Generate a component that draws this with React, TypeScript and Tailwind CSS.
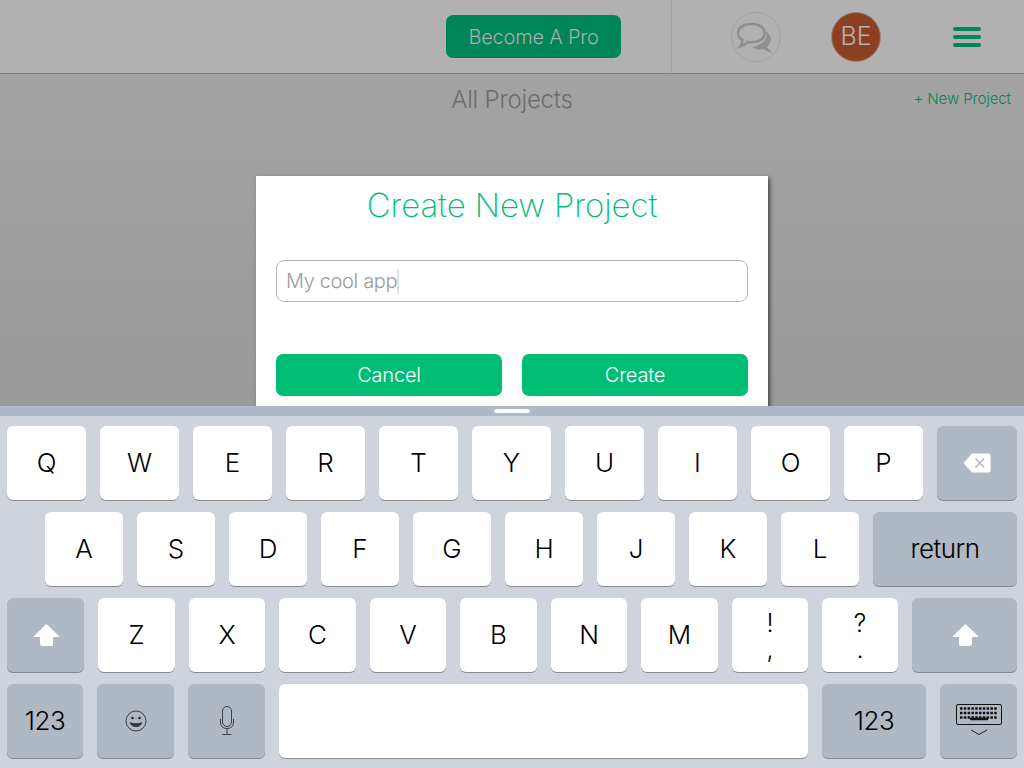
const FONT = "font-['Inter',Arial,sans-serif] font-light";

const ShiftIcon = () => (
  <svg width="27" height="24" viewBox="0 0 27 24" className="ml-[1px]">
    <path d="M13.5 1 L26 13 Q26.5 14 25.5 14 L20 14 L20 21 Q20 23 18 23 L9 23 Q7 23 7 21 L7 14 L1.500 14 Q0.500 14 1 13 Z" fill="#fff" />
  </svg>
);

const BackspaceIcon = () => (
  <svg width="28" height="20" viewBox="0 0 28 20">
    <path d="M9 0.500 H25.500 Q27.500 0.500 27.500 2.500 V17.500 Q27.500 19.500 25.500 19.500 H9 L0.500 10 Z" fill="#fff" />
    <path d="M12.500 5.500 L21 14.500 M21 5.500 L12.500 14.500" stroke="#b0b8c3" strokeWidth="1.600" />
  </svg>
);

const EmojiIcon = () => (
  <svg width="22" height="22" viewBox="0 0 22 22" fill="none">
    <circle cx="11" cy="11" r="10" stroke="#222" strokeWidth="0.800" />
    <circle cx="7.500" cy="8" r="1.300" fill="#222" />
    <circle cx="14.500" cy="8" r="1.300" fill="#222" />
    <path d="M4.500 12 Q11 14.500 17.500 12 Q16 17 11 17 Q6 17 4.500 12 Z" fill="#333" />
  </svg>
);

const MicIcon = () => (
  <svg width="14" height="29" viewBox="0 0 14 29" fill="none" stroke="#333" strokeWidth="0.900">
    <rect x="2.500" y="0.500" width="9" height="20" rx="4.500" />
    <path d="M0.500 13 V16 Q0.500 22.500 7 22.500 Q13.500 22.500 13.500 16 V13" />
    <path d="M7 22.500 V28 M2.500 28.500 H11.500" />
  </svg>
);

const HideKeyboardIcon = () => (
  <svg width="46" height="33" viewBox="0 0 46 33" fill="none">
    <rect x="0.500" y="0.500" width="45" height="20" rx="1.500" stroke="#111" />
    <path
      d="M4 4.500 H42 M4 9 H42 M4 13.500 H42"
      stroke="#111"
      strokeWidth="2.500"
      strokeDasharray="2.500 1.300"
    />
    <path d="M14 15 H32" stroke="#111" strokeWidth="2.500" />
    <path d="M15 26 L23 30.500 L31 26" stroke="#222" strokeWidth="1" />
  </svg>
);

const ChatIcon = () => (
  <svg width="40" height="32" viewBox="0 0 40 32">
    <path
      d="M29 10 C33 12 35 15 35 18 C35 21 33 24 31 26 C32 28 34 30 37 32 C33 31 30 30 27 28 C23 29 19 28 16 26 C22 25 28 22 30 17 C31 14 30 12 29 10 Z"
      fill="#8f8f8f"
    />
    <path
      d="M15.500 3 C7 3 2 7 2 12 C2 15 3.500 17.500 6.500 19 C6.500 21 5.500 23.500 4 25.500 C7 24.500 10 23 11.500 21 C13 21.300 14.500 21.300 15.500 21.300 C24 21.300 28.500 17 28.500 12 C28.500 7 24 3 15.500 3 Z"
      fill="none"
      stroke="#8f8f8f"
      strokeWidth="2.500"
    />
  </svg>
);

const Key = ({ label, className = "" }: { label?: React.ReactNode; className?: string }) => (
  <div
    className={`h-[74px] pb-[2px] flex items-center justify-center rounded-[6px] bg-white text-[26px] text-black shadow-[0_1px_0_#8b8d92] ${className}`}
  >
    {label}
  </div>
);

const ModKey = ({ children, className = "" }: { children?: React.ReactNode; className?: string }) => (
  <div
    className={`h-[74px] pb-[1px] flex items-center justify-center rounded-[6px] bg-[#b0b8c3] text-[26px] tracking-[-0.5px] text-black shadow-[0_1px_0_#85888e] ${className}`}
  >
    {children}
  </div>
);

const PunctKey = ({ label }: { label: string }) => (
  <div className="w-[76px] h-[74px] pt-[1px] flex items-center justify-center rounded-[6px] bg-white text-[25px] leading-[26px] text-center whitespace-pre-line text-black shadow-[0_1px_0_#8b8d92]">
    {label}
  </div>
);

const Keyboard = () => {
  const row1 = ["Q", "W", "E", "R", "T", "Y", "U", "I", "O", "P"];
  const row2 = ["A", "S", "D", "F", "G", "H", "J", "K", "L"];
  const row3 = [
    { k: "Z", w: "w-[77px]" },
    { k: "X", w: "w-[76px]" },
    { k: "C", w: "w-[77px]" },
    { k: "V", w: "w-[76px]" },
    { k: "B", w: "w-[77px]" },
    { k: "N", w: "w-[76px]" },
    { k: "M", w: "w-[77px]" },
  ];

  return (
    <div className="h-[362px] shrink-0 relative z-10 bg-[#cfd3db]">
      <div className="h-[10px] bg-[#aeb8c4] flex items-center justify-center">
        <div className="w-[36px] h-[4px] rounded-full bg-white" />
      </div>
      <div className="flex flex-col gap-[12px] pt-[10px] px-[7px]">
        <div className="flex gap-[14px]">
          {row1.map((k) => (
            <Key key={k} label={k} className="w-[79px]" />
          ))}
          <ModKey className="flex-1">
            <BackspaceIcon />
          </ModKey>
        </div>
        <div className="flex gap-[14px] pl-[38px]">
          {row2.map((k) => (
            <Key key={k} label={k} className="flex-1" />
          ))}
          <ModKey className="w-[144px]">return</ModKey>
        </div>
        <div className="flex gap-[14px]">
          <ModKey className="w-[77px]">
            <ShiftIcon />
          </ModKey>
          {row3.map(({ k, w }) => (
            <Key key={k} label={k} className={w} />
          ))}
          <PunctKey label={"!\n,"} />
          <PunctKey label={"?\n."} />
          <ModKey className="flex-1">
            <ShiftIcon />
          </ModKey>
        </div>
        <div className="flex gap-[14px]">
          <ModKey className="w-[76px]">123</ModKey>
          <ModKey className="w-[77px]">
            <EmojiIcon />
          </ModKey>
          <ModKey className="w-[77px]">
            <MicIcon />
          </ModKey>
          <Key className="flex-1" />
          <ModKey className="w-[104px]">123</ModKey>
          <ModKey className="w-[77px]">
            <HideKeyboardIcon />
          </ModKey>
        </div>
      </div>
    </div>
  );
};

const Header = () => (
  <header className="h-[74px] shrink-0 flex bg-[#b1b1b1] border-b border-[#7b7b7b]">
    <div className="flex-1 flex items-center justify-end pr-[50px] pb-[1px]">
      <div className="w-[175px] h-[43px] pt-[1px] flex items-center justify-center rounded-[7px] bg-[#008558] text-[20px] tracking-[-0.2px] text-[#adadad]">
        Become A Pro
      </div>
    </div>
    <div className="w-[353px] border-l border-[#a3a3a3] flex items-center pl-[59px]">
      <div className="w-[50px] h-[50px] rounded-full border border-[#a2a2a2] flex items-center justify-center">
        <ChatIcon />
      </div>
      <div className="ml-[50px] w-[50px] h-[50px] pt-[1px] rounded-full bg-[#8c4022] border border-[#a08478] flex items-center justify-center text-[25px] text-[#b3b3b3]">
        BE
      </div>
      <div className="ml-[72px] w-[28px] flex flex-col gap-[4px]">
        <div className="h-[4px] rounded-full bg-[#008558]" />
        <div className="h-[4px] rounded-full bg-[#008558]" />
        <div className="h-[4px] rounded-full bg-[#008558]" />
      </div>
    </div>
  </header>
);

const CreateDialog = () => (
  <div className="absolute left-[256px] top-[102px] w-[512px] h-[260px] bg-white px-[20px] shadow-[2px_2px_4px_rgba(0,0,0,0.55)]">
    <h2 className="h-[59px] flex items-center justify-center font-extralight text-[33px] tracking-[-0.1px] text-[#00bd76]">
      Create New Project
    </h2>
    <div className="mt-[25px] h-[42px] flex items-center rounded-[8px] border border-[#b7b7b7] px-[9px] text-[20px] tracking-[-0.35px] text-[#9b9b9b]">
      My cool app
      <span className="w-[2px] h-[25px] bg-[#d6e0fb]" />
    </div>
    <div className="mt-[52px] flex gap-[20px]">
      <div className="flex-1 h-[42px] flex items-center justify-center rounded-[7px] bg-[#00bd76] text-[20px] tracking-[-0.2px] text-white">
        Cancel
      </div>
      <div className="flex-1 h-[42px] flex items-center justify-center rounded-[7px] bg-[#00bd76] text-[20px] tracking-[-0.2px] text-white">
        Create
      </div>
    </div>
  </div>
);

export default function App() {
  return (
    <div className={`${FONT} relative w-[1024px] h-[768px] flex flex-col overflow-hidden`}>
      <Header />
      <main className="relative flex-1 bg-gradient-to-b from-[#a3a3a3] to-[#999999]">
        <div className="relative h-[52px] flex items-center justify-center text-[24px] tracking-[-0.2px] text-[#6d6d6d]">
          All Projects
          <span className="absolute right-[13px] top-[14px] text-[15px] tracking-[-0.1px] text-[#008558]">+ New Project</span>
        </div>
        <CreateDialog />
      </main>
      <Keyboard />
    </div>
  );
}
